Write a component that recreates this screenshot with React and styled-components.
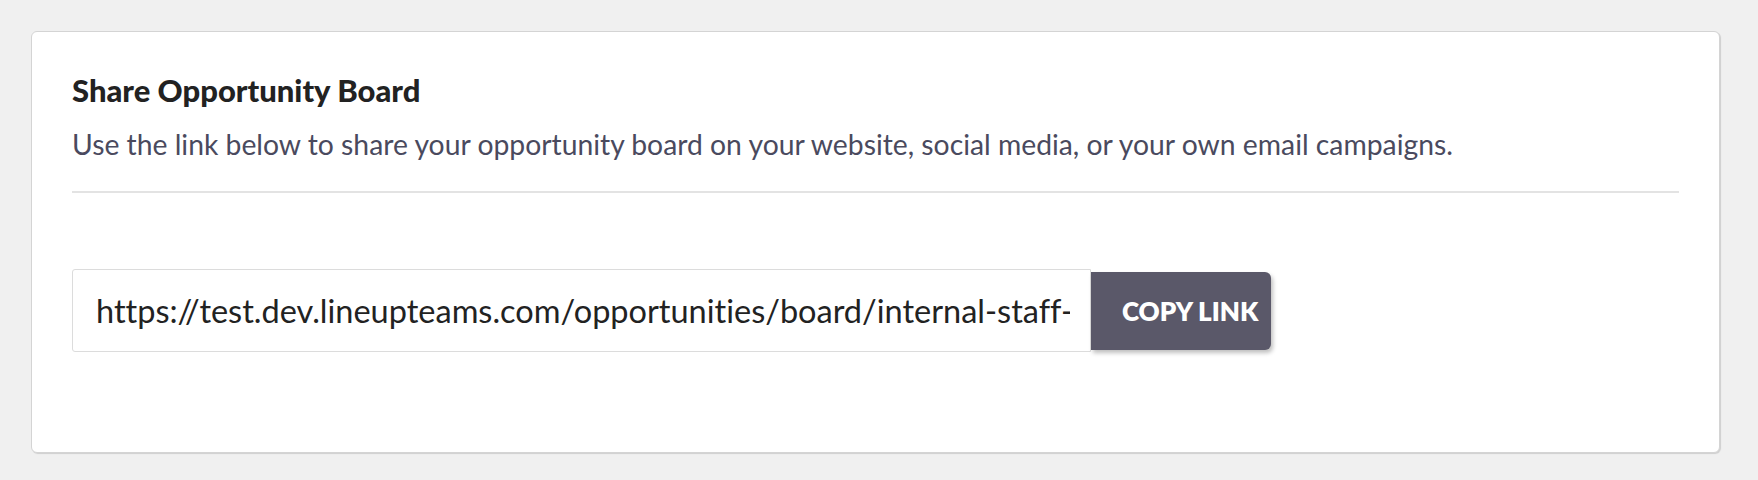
import React from "react";
import styled, { createGlobalStyle } from "styled-components";

const Global = createGlobalStyle`
  html, body { margin: 0; padding: 0; background: #f0f0f0; }
  body { font-family: Lato, "Open Sans", sans-serif; font-variant-ligatures: none; }
  * { box-sizing: border-box; }
`;

const Page = styled.div`
  padding: 31px 38px 27px 31px;
`;

const Card = styled.section`
  background: #fff;
  border: 1px solid #d4d4d4;
  border-radius: 6px;
  box-shadow: 1px 1px 1px rgba(0, 0, 0, 0.14);
  padding: 40px 40px 100px 40px;
`;

const Title = styled.h2`
  margin: 0;
  font-family: Lato, sans-serif;
  font-weight: 900;
  font-size: 31px;
  line-height: 36px;
  color: #222222;
`;

const Description = styled.p`
  margin: 19px 0 0;
  font-family: Lato, sans-serif;
  font-weight: 400;
  font-size: 28.3px;
  line-height: 34px;
  color: #4a4a5e;
`;

const Divider = styled.hr`
  margin: 30px 0 0;
  border: 0;
  height: 2px;
  background: #e3e3e3;
`;

const LinkRow = styled.div`
  margin-top: 76px;
  display: flex;
  align-items: center;
`;

const LinkInput = styled.input`
  width: 1019px;
  height: 83px;
  border: 1px solid #dcdcdc;
  border-radius: 3px 0 0 3px;
  padding: 0 20px 0 23px;
  font-family: Lato, sans-serif;
  font-size: 32.5px;
  font-variant-ligatures: none;
  color: #222222;
  background: #fff;
  outline: none;
`;

const CopyButton = styled.button`
  width: 180px;
  height: 78px;
  border: 0;
  border-radius: 0 6px 6px 0;
  background: #5a5869;
  color: #ffffff;
  font-family: Lato, sans-serif;
  font-weight: 800;
  font-size: 26px;
  text-align: left;
  padding: 0 0 0 31px;
  box-shadow: 2px 3px 4px rgba(0, 0, 0, 0.25);
  cursor: pointer;
`;

export default function App() {
  return (
    <Page>
      <Global />
      <Card>
        <Title>Share Opportunity Board</Title>
        <Description>
          Use the link below to share your opportunity board on your website, social media, or your own email campaigns.
        </Description>
        <Divider />
        <LinkRow>
          <LinkInput
            readOnly
            value="https://test.dev.lineupteams.com/opportunities/board/internal-staff-opportunities"
          />
          <CopyButton>COPY LINK</CopyButton>
        </LinkRow>
      </Card>
    </Page>
  );
}
